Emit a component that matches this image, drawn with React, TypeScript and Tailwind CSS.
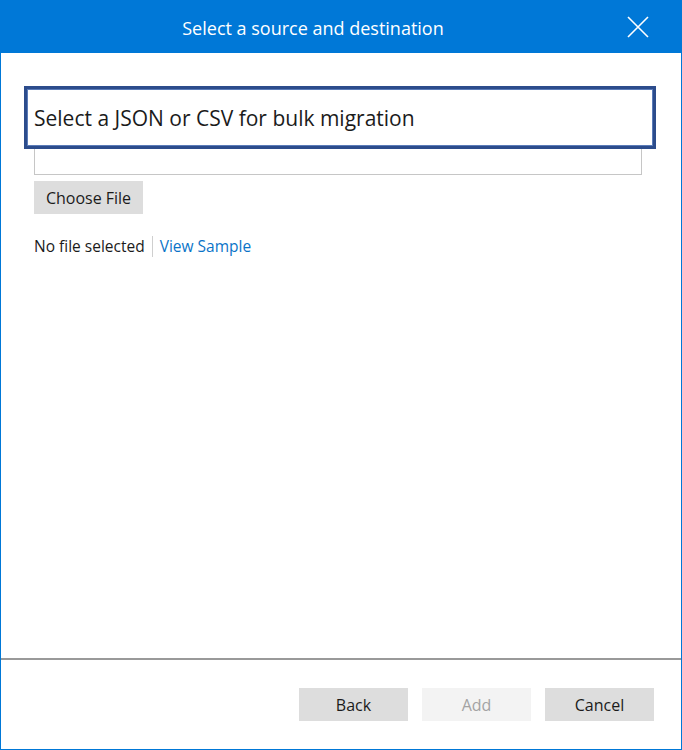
export default function App() {
    return (
        <div
            className="w-[682px] h-[750px] flex flex-col bg-white border border-t-0 border-[#0078d7] text-[#1b1b1b]"
            style={{ fontFamily: '"Open Sans", "Noto Sans", sans-serif' }}
        >
            <div className="h-[53px] shrink-0 bg-[#0078d7] flex items-center -mx-px">
                <div className="flex-1 text-center text-white text-[18px] pt-[3px]">
                    Select a source and destination
                </div>
                <button className="w-[24px] h-[24px] mr-[32px] flex items-center justify-center">
                    <svg width="22" height="22" viewBox="0 0 22 22" fill="none" stroke="white" strokeWidth="1.6">
                        <path d="M1 1L21 21M21 1L1 21" />
                    </svg>
                </button>
            </div>

            <div className="flex-1 pl-[33px] pr-[39px] pt-[33px]">
                <div className="-ml-[10px] w-[632px] h-[63px] border-[3px] border-[#2c4c8c] flex items-center pl-[7px] pt-[3px] ring-1 ring-inset ring-[#5a7bb8]">
                    <span className="text-[21px]">Select a JSON or CSV for bulk migration</span>
                </div>
                <div className="h-[26px] border border-t-0 border-[#c6c6c6]" />
                <button className="mt-[6px] w-[109px] h-[33px] bg-[#dddddd] text-[16px]">Choose File</button>
                <div className="mt-[21px] flex items-center text-[15.5px]">
                    <span>No file selected</span>
                    <span className="mx-[7px] w-px h-[21px] bg-[#cfcfcf]" />
                    <a className="text-[#0a74c8] cursor-pointer">View Sample</a>
                </div>
            </div>

            <div className="shrink-0 border-t-2 border-[#999999] flex justify-end gap-[14px] pt-[28px] pb-[28px] pr-[27px]">
                <button className="w-[109px] h-[33px] bg-[#dddddd] text-[16px]">Back</button>
                <button className="w-[109px] h-[33px] bg-[#f3f3f3] text-[16px] text-[#a3a3a3]">Add</button>
                <button className="w-[109px] h-[33px] bg-[#dddddd] text-[16px]">Cancel</button>
            </div>
        </div>
    );
}
